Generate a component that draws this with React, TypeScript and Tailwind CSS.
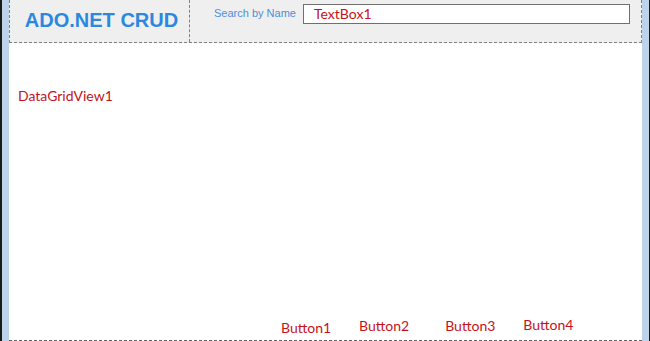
export default function App() {
  const label = "text-[#c4121a] text-[14px] leading-none [font-family:Lato,'Open_Sans',sans-serif]";
  return (
    <div className="flex h-[341px] w-[650px] overflow-hidden bg-white">
      <div className="w-[2px] bg-[#1a1a1a]" />
      <div className="w-[7px] bg-[#bcd3ea]" />
      <div className="flex min-w-0 flex-1 flex-col">
        <div className="flex h-[43px] border-b border-l border-r border-dashed border-[#808080] bg-[#efefef]">
          <div className="flex w-[180px] items-center justify-center border-r border-dashed border-[#808080] pb-[3px]">
            <span className="ml-[4px] text-[20px] font-bold leading-none text-[#2b88e0] [font-family:'Liberation_Sans',Arial,sans-serif]">
              ADO.NET CRUD
            </span>
          </div>
          <div className="flex flex-1 items-start pt-[4px]">
            <span className="ml-[24px] mt-[4px] w-[89px] shrink-0 text-[11px] leading-none text-[#4a90d9] [font-family:'Liberation_Sans',Arial,sans-serif]">
              Search by Name
            </span>
            <div className="flex h-[20px] w-[327px] items-center border border-[#707070] bg-white pl-[10px]">
              <span className={label}>TextBox1</span>
            </div>
          </div>
        </div>
        <div className="flex flex-1 flex-col border-b border-dashed border-[#606060] bg-white">
          <div className="ml-[9px] mt-[40px]">
            <span className={label}>DataGridView1</span>
          </div>
          <div className="mt-auto flex items-end pb-[5px] pl-[272px]">
            <span className={label}>Button1</span>
            <span className={`${label} mb-[2px] ml-[28px]`}>Button2</span>
            <span className={`${label} mb-[2px] ml-[36px]`}>Button3</span>
            <span className={`${label} mb-[3px] ml-[28px]`}>Button4</span>
          </div>
        </div>
      </div>
      <div className="w-[7px] bg-[#bcd3ea]" />
      <div className="w-[1px] bg-[#1a1a1a]" />
    </div>
  );
}
